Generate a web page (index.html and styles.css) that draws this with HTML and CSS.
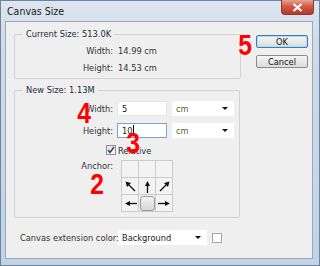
FILE: index.html
```html
<!DOCTYPE html>
<html>
<head>
    <meta charset="UTF-8">
    <title>Canvas Size</title>
    <link rel="stylesheet" href="styles.css">
</head>
<body>
<div class="window">
    <div class="titlebar">
        <span class="title">Canvas Size</span>
        <span class="close">
            <svg width="11" height="9" viewBox="0 0 11 9"><path d="M1.5 1 L9.5 8 M9.5 1 L1.5 8" stroke="#fff" stroke-width="2.2"/></svg>
        </span>
    </div>
    <div class="client">
        <div class="main">
            <div class="groups">
                <fieldset class="group current">
                    <legend>Current Size: 513.0K</legend>
                    <div class="row"><span class="lbl">Width:</span><span class="val">14.99 cm</span></div>
                    <div class="row"><span class="lbl">Height:</span><span class="val">14.53 cm</span></div>
                </fieldset>
                <fieldset class="group newsize">
                    <legend>New Size: 1.13M</legend>
                    <div class="row field-row"><span class="lbl">Width:</span><span class="field">5</span><span class="select">cm<i class="caret"></i></span></div>
                    <div class="row field-row"><span class="lbl">Height:</span><span class="field focus">10<i class="cursor"></i></span><span class="select">cm<i class="caret"></i></span></div>
                    <div class="row check-row"><span class="check">
                        <svg width="8" height="8" viewBox="0 0 8 8"><path d="M1 4 L3 6.5 L7 1" stroke="#2a3f6a" stroke-width="1.4" fill="none"/></svg>
                    </span>Relative</div>
                    <div class="row anchor-row">
                        <span class="lbl">Anchor:</span>
                        <div class="anchor">
                            <span class="cell"></span>
                            <span class="cell"></span>
                            <span class="cell"></span>
                            <span class="cell"><svg width="15" height="15" viewBox="0 0 15 15"><path d="M12 12 L4 4" stroke="#111" stroke-width="1.2"/><path d="M2.5 2.5 L8 4 L4 8 Z" fill="#111"/></svg></span>
                            <span class="cell"><svg width="15" height="15" viewBox="0 0 15 15"><path d="M7.5 14 L7.5 5" stroke="#111" stroke-width="1.3"/><path d="M7.5 2 L10 7 L5 7 Z" fill="#111"/></svg></span>
                            <span class="cell"><svg width="15" height="15" viewBox="0 0 15 15"><path d="M3 12 L11 4" stroke="#111" stroke-width="1.2"/><path d="M12.5 2.5 L11 8 L7 4 Z" fill="#111"/></svg></span>
                            <span class="cell"><svg width="15" height="15" viewBox="0 0 15 15"><path d="M14 7.5 L5 7.5" stroke="#111" stroke-width="1.3"/><path d="M2 7.5 L7 5 L7 10 Z" fill="#111"/></svg></span>
                            <span class="cell selected"><span class="knob"></span></span>
                            <span class="cell"><svg width="15" height="15" viewBox="0 0 15 15"><path d="M1 7.5 L10 7.5" stroke="#111" stroke-width="1.3"/><path d="M13 7.5 L8 5 L8 10 Z" fill="#111"/></svg></span>
                        </div>
                    </div>
                </fieldset>
            </div>
            <div class="buttons">
                <span class="btn default">OK</span>
                <span class="btn">Cancel</span>
            </div>
        </div>
        <div class="extension">
            <span class="ext-lbl">Canvas extension color:</span>
            <span class="select wide">Background<i class="caret"></i></span>
            <span class="swatch"></span>
        </div>
    </div>
    <span class="mark m5">5</span>
    <span class="mark m4">4</span>
    <span class="mark m3">3</span>
    <span class="mark m2">2</span>
</div>
</body>
</html>
```

FILE: styles.css
```css
*{
    margin: 0px;
    padding: 0px;
    box-sizing: border-box;
}
body{
    font-family: "DejaVu Sans Condensed", "DejaVu Sans", sans-serif;
    font-size: 9.2px;
    color: #1e2b3c;
}
.window{
    position: relative;
    width: 320px;
    height: 266px;
    border: 1px solid #6c84a1;
    background: linear-gradient(#dde6ef, #cfdbe8 40px, #c3d3e4);
    padding: 0px 6px 6px 4px;
    display: flex;
    flex-direction: column;
}
.titlebar{
    height: 20px;
    display: flex;
    justify-content: space-between;
    align-items: flex-start;
}
.title{
    margin: 4px 0px 0px 2px;
    font-size: 10.5px;
    color: #1a1a1a;
}
.close{
    width: 33px;
    height: 15px;
    margin-top: -1px;
    margin-right: -1px;
    border: 1px solid #8a3a2e;
    border-top: none;
    border-radius: 0px 0px 4px 4px;
    background: linear-gradient(#e6a393, #cf5a46 45%, #b83a25);
    display: flex;
    justify-content: center;
    align-items: center;
}
.client{
    flex: 1;
    background: #efefef;
    border: 1px solid #98a8bb;
    padding: 6px 0px 0px 8px;
}
.main{
    display: flex;
}
.group{
    border: 1px solid #cfd3d7;
    border-radius: 2px;
    padding: 0px 0px 0px 8px;
    width: 227px;
}
.group legend{
    padding: 0px 3px;
    line-height: 12px;
}
.current{
    padding-top: 2px;
    padding-bottom: 2px;
}
.row{
    display: flex;
    align-items: center;
    height: 17px;
    white-space: nowrap;
}
.lbl{
    width: 90px;
    flex-shrink: 0;
    text-align: right;
    color: #333;
}
.val{
    margin-left: 5px;
    color: #333;
}
.newsize{
    margin-top: 5px;
    padding-top: 3px;
    padding-bottom: 5px;
    width: 226px;
}
.field-row{
    height: 19px;
    margin-bottom: 3px;
}
.field{
    margin-left: 4px;
    width: 50px;
    height: 15px;
    background: #fff;
    border: 1px solid #e4e4e4;
    padding-left: 4px;
    line-height: 13px;
    color: #222;
}
.field.focus{
    border-color: #7da2ce;
}
.cursor{
    display: inline-block;
    width: 1px;
    height: 10px;
    background: #000;
    vertical-align: -1px;
}
.select{
    margin-left: 5px;
    width: 62px;
    height: 15px;
    background: #fff;
    padding-left: 4px;
    line-height: 15px;
    color: #6b5a1e;
    display: flex;
    justify-content: space-between;
    align-items: center;
}
.caret{
    width: 0px;
    height: 0px;
    border-left: 3px solid transparent;
    border-right: 3px solid transparent;
    border-top: 3px solid #111;
    margin-right: 6px;
}
.check-row{
    height: 16px;
    margin-top: -1px;
    padding-left: 83px;
}
.check{
    width: 10px;
    height: 10px;
    border: 1px solid #8e8f8f;
    background: linear-gradient(#e4e4e4, #fafafa);
    margin-right: 2px;
    display: flex;
    justify-content: center;
    align-items: center;
}
.anchor-row{
    height: auto;
    align-items: flex-start;
    margin-top: 2px;
}
.anchor{
    margin-left: 8px;
    display: grid;
    grid-template-columns: repeat(3, 17px);
    grid-template-rows: repeat(3, 17px);
    border-top: 1px solid #cbcbcb;
    border-left: 1px solid #cbcbcb;
    background: #f3f3f3;
}
.cell{
    border-right: 1px solid #cbcbcb;
    border-bottom: 1px solid #cbcbcb;
    display: flex;
    justify-content: center;
    align-items: center;
}
.knob{
    width: 15px;
    height: 15px;
    border: 1px solid #9a9a9a;
    border-radius: 3px;
    background: linear-gradient(#f2f2f2, #d8d8d8);
}
.buttons{
    margin: 7px 0px 0px 15px;
    display: flex;
    flex-direction: column;
    gap: 7px;
}
.btn{
    width: 52px;
    height: 13px;
    border: 1px solid #8b8b8b;
    border-radius: 2px;
    background: linear-gradient(#f5f5f5, #dcdcdc);
    text-align: center;
    line-height: 11px;
    color: #111;
}
.btn.default{
    border-color: #3c7fb1;
    box-shadow: inset 0px 0px 0px 1px #a9dcf6;
}
.extension{
    margin: 12px 0px 0px 6px;
    display: flex;
    align-items: center;
    white-space: nowrap;
}
.ext-lbl{
    color: #333;
    width: 98px;
    flex-shrink: 0;
}
.select.wide{
    width: 89px;
    margin-left: 0px;
    color: #222;
}
.swatch{
    margin-left: 5px;
    width: 10px;
    height: 10px;
    border: 1px solid #a5a5a5;
    background: #fff;
}
.mark{
    position: absolute;
    font-family: "Liberation Sans", sans-serif;
    font-weight: bold;
    font-size: 29px;
    line-height: 29px;
    color: #f00;
    transform: scaleX(0.85);
}
.m5{ left: 236px; top: 30px; }
.m4{ left: 75px; top: 98px; }
.m3{ left: 124px; top: 128px; }
.m2{ left: 88px; top: 169px; }
```
